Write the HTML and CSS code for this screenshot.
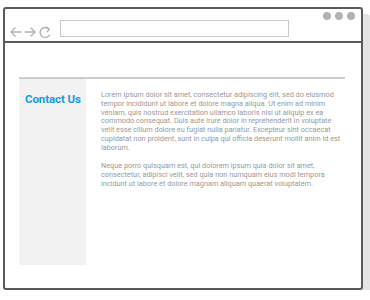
FILE: index.html
```html
<!DOCTYPE html>
<html>
<head>
<meta charset="utf-8">
<link rel="stylesheet" href="styles.css">
</head>
<body>
<div class="window">
  <div class="toolbar">
    <div class="nav">
      <svg width="44" height="14" viewBox="0 0 44 14">
        <g fill="none" stroke="#b3b3b3" stroke-width="1.4" stroke-linecap="round" stroke-linejoin="round">
          <path d="M2 7 H12 M6 3 L2 7 L6 11"/>
          <path d="M16 7 H26 M22 3 L26 7 L22 11"/>
          <path d="M40 4.2 A5 5 0 1 0 40.5 10"/>
          <path d="M37.5 2.3 L40.2 4.2 L38.3 6.8"/>
        </g>
      </svg>
    </div>
    <div class="address"></div>
    <div class="dots"><span></span><span></span><span></span></div>
  </div>
  <div class="content">
    <div class="panel">
      <aside class="sidebar"><h2>Contact Us</h2></aside>
      <div class="text">
        <p>Lorem ipsum dolor sit amet, consectetur adipiscing elit, sed do eiusmod tempor incididunt ut labore et dolore magna aliqua. Ut enim ad minim veniam, quis nostrud exercitation ullamco laboris nisi ut aliquip ex ea commodo consequat. Duis aute irure dolor in reprehenderit in voluptate velit esse cillum dolore eu fugiat nulla pariatur. Excepteur sint occaecat cupidatat non proident, sunt in culpa qui officia deserunt mollit anim id est laborum.</p>
        <p>Neque porro quisquam est, qui dolorem ipsum quia dolor sit amet, consectetur, adipisci velit, sed quia non numquam eius modi tempora incidunt ut labore et dolore magnam aliquam quaerat voluptatem.</p>
      </div>
    </div>
  </div>
</div>
</body>
</html>
```
FILE: styles.css
```css
* { box-sizing: border-box; }
html, body { margin: 0; padding: 0; background: #fff; }
body { padding: 7px 0 0 3px; font-family: Roboto, "Liberation Sans", sans-serif; }
.window {
  width: 360px;
  height: 283px;
  border: 2px solid #5a5a5a;
  border-radius: 3px;
  box-shadow: 7px 7px 0 #e4e4e4;
  background: #fff;
  display: flex;
  flex-direction: column;
}
.toolbar {
  height: 34px;
  border-bottom: 2px solid #5a5a5a;
  display: flex;
  align-items: flex-start;
  position: relative;
}
.nav { margin: 16px 0 0 4px; height: 14px; }
.nav svg { display: block; }
.address {
  margin: 11px 0 0 7px;
  width: 229px;
  height: 17px;
  border: 1px solid #c8c8c8;
}
.dots {
  position: absolute;
  top: 3px;
  right: 6px;
  display: flex;
  gap: 4px;
}
.dots span {
  width: 8px;
  height: 8px;
  border-radius: 50%;
  background: #b3b3b3;
}
.content {
  flex: 1;
  padding: 34px 16px 23px 14px;
  display: flex;
}
.panel {
  flex: 1;
  border-top: 2px solid #cccccc;
  display: flex;
}
.sidebar {
  width: 67px;
  background: #f2f2f2;
  padding: 13px 0 0 6px;
}
.sidebar h2 {
  margin: 0;
  font-size: 11.5px;
  font-weight: bold;
  color: #1b9bd8;
  letter-spacing: -0.1px;
}
.text {
  flex: 1;
  padding: 12px 0 0 15px;
  font-size: 7.3px;
  line-height: 8.8px;
  color: #9a9a9a;
}
.text p { margin: 0 0 9.4px; }
```
